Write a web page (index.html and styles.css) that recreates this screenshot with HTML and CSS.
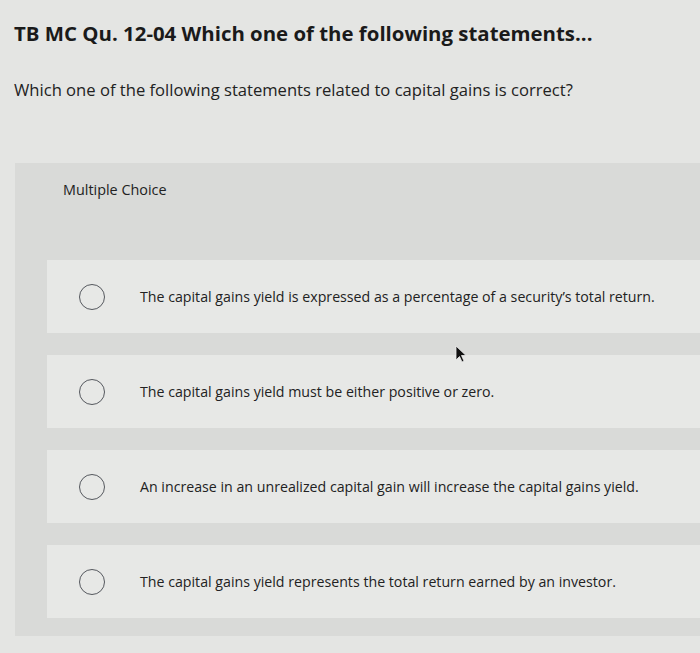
FILE: index.html
```html
<!DOCTYPE html>
<html>
<head>
<meta charset="utf-8">
<link rel="stylesheet" href="styles.css">
</head>
<body>
<div class="page">
  <h1 class="title">TB MC Qu. 12-04 Which one of the following statements...</h1>
  <p class="question">Which one of the following statements related to capital gains is correct?</p>
  <div class="panel">
    <div class="label">Multiple Choice</div>
    <div class="options">
      <div class="option"><span class="radio"></span><span class="text">The capital gains yield is expressed as a percentage of a security’s total return.</span></div>
      <div class="option"><span class="radio"></span><span class="text">The capital gains yield must be either positive or zero.</span></div>
      <div class="option"><span class="radio"></span><span class="text">An increase in an unrealized capital gain will increase the capital gains yield.</span></div>
      <div class="option"><span class="radio"></span><span class="text">The capital gains yield represents the total return earned by an investor.</span></div>
    </div>
  </div>
  <svg class="cursor" width="14" height="20" viewBox="0 0 14 20"><path d="M1 1 L1 15 L4.5 11.5 L7 17 L9 16 L6.5 10.5 L11 10.5 Z" fill="#111" stroke="#eee" stroke-width="0.8"/></svg>
</div>
</body>
</html>
```
FILE: styles.css
```css
html, body { margin: 0; padding: 0; }
body {
  background: #e4e5e3;
  font-family: "Open Sans", "Liberation Sans", sans-serif;
  color: #222;
  width: 700px;
  height: 653px;
  overflow: hidden;
}
.page { position: relative; padding: 19px 0 0 0; }
.title {
  margin: 0 0 0 14px;
  font-size: 20.4px;
  font-weight: 700;
  line-height: 28px;
  color: #1a1a1a;
}
.question {
  margin: 31px 0 0 14px;
  font-size: 16.6px;
  line-height: 24px;
}
.panel {
  margin: 61px 0 0 15px;
  background: #d9dad8;
  padding: 16px 0 18px 32px;
}
.label {
  margin-left: 16px;
  font-size: 14.4px;
  line-height: 22px;
}
.options {
  margin-top: 59px;
  display: flex;
  flex-direction: column;
  gap: 22px;
}
.option {
  background: #e7e8e6;
  height: 73px;
  display: flex;
  align-items: center;
  padding-left: 32px;
}
.radio {
  width: 26px;
  height: 26px;
  border: 1.5px solid #55585e;
  border-radius: 50%;
  box-sizing: border-box;
  flex: none;
}
.text {
  margin-left: 35px;
  font-size: 14.2px;
  line-height: 20px;
}
.cursor { position: absolute; left: 455px; top: 345px; }
```
